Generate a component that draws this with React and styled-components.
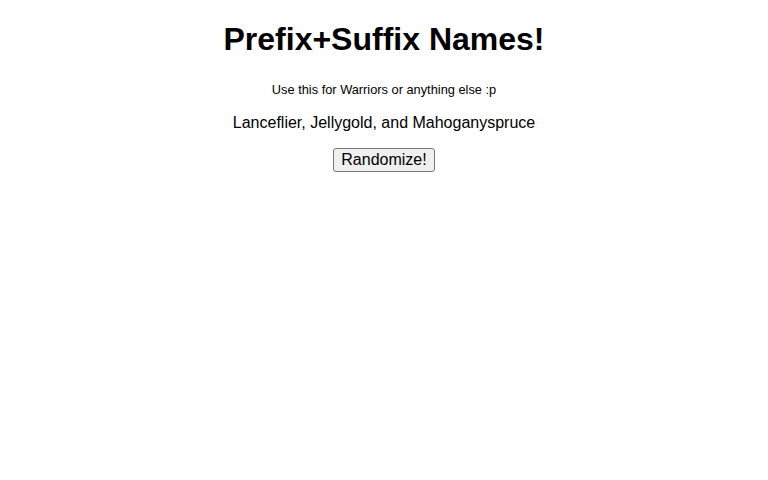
import React, { useState } from "react";
import styled, { createGlobalStyle } from "styled-components";

const Global = createGlobalStyle`
  html, body { margin: 0; padding: 0; background: #fff; }
  body { font-family: "Liberation Sans", Arial, sans-serif; color: #000; }
`;

const Page = styled.main`
  display: flex;
  flex-direction: column;
  align-items: center;
  padding-top: 21px;
  text-align: center;
`;

const Title = styled.h1`
  margin: 0;
  font-size: 32px;
  font-weight: 700;
  line-height: 37px;
`;

const Note = styled.p`
  margin: 24px 0 0;
  font-size: 12.8px;
  line-height: 15px;
`;

const Names = styled.p`
  margin: 17px 0 0;
  font-size: 16px;
  line-height: 18px;
`;

const Button = styled.button`
  margin-top: 16px;
  font-family: "Liberation Sans", Arial, sans-serif;
  font-size: 16px;
  line-height: 18px;
  padding: 2px 7px;
  color: #000;
  background: #efefef;
  border: 1px solid #767676;
  border-radius: 3px;
  cursor: pointer;
`;

const prefixes = ["Lance", "Jelly", "Mahogany", "Storm", "Bramble", "Frost", "Ash", "Moss"];
const suffixes = ["flier", "gold", "spruce", "tail", "pelt", "heart", "claw", "whisker"];

const pick = (list) => list[Math.floor(Math.random() * list.length)];

export default function App() {
  const [names, setNames] = useState(["Lanceflier", "Jellygold", "Mahoganyspruce"]);
  const randomize = () =>
    setNames([0, 1, 2].map(() => pick(prefixes) + pick(suffixes)));

  return (
    <>
      <Global />
      <Page>
        <Title>Prefix+Suffix Names!</Title>
        <Note>Use this for Warriors or anything else :p</Note>
        <Names>
          {names[0]}, {names[1]}, and {names[2]}
        </Names>
        <Button onClick={randomize}>Randomize!</Button>
      </Page>
    </>
  );
}
